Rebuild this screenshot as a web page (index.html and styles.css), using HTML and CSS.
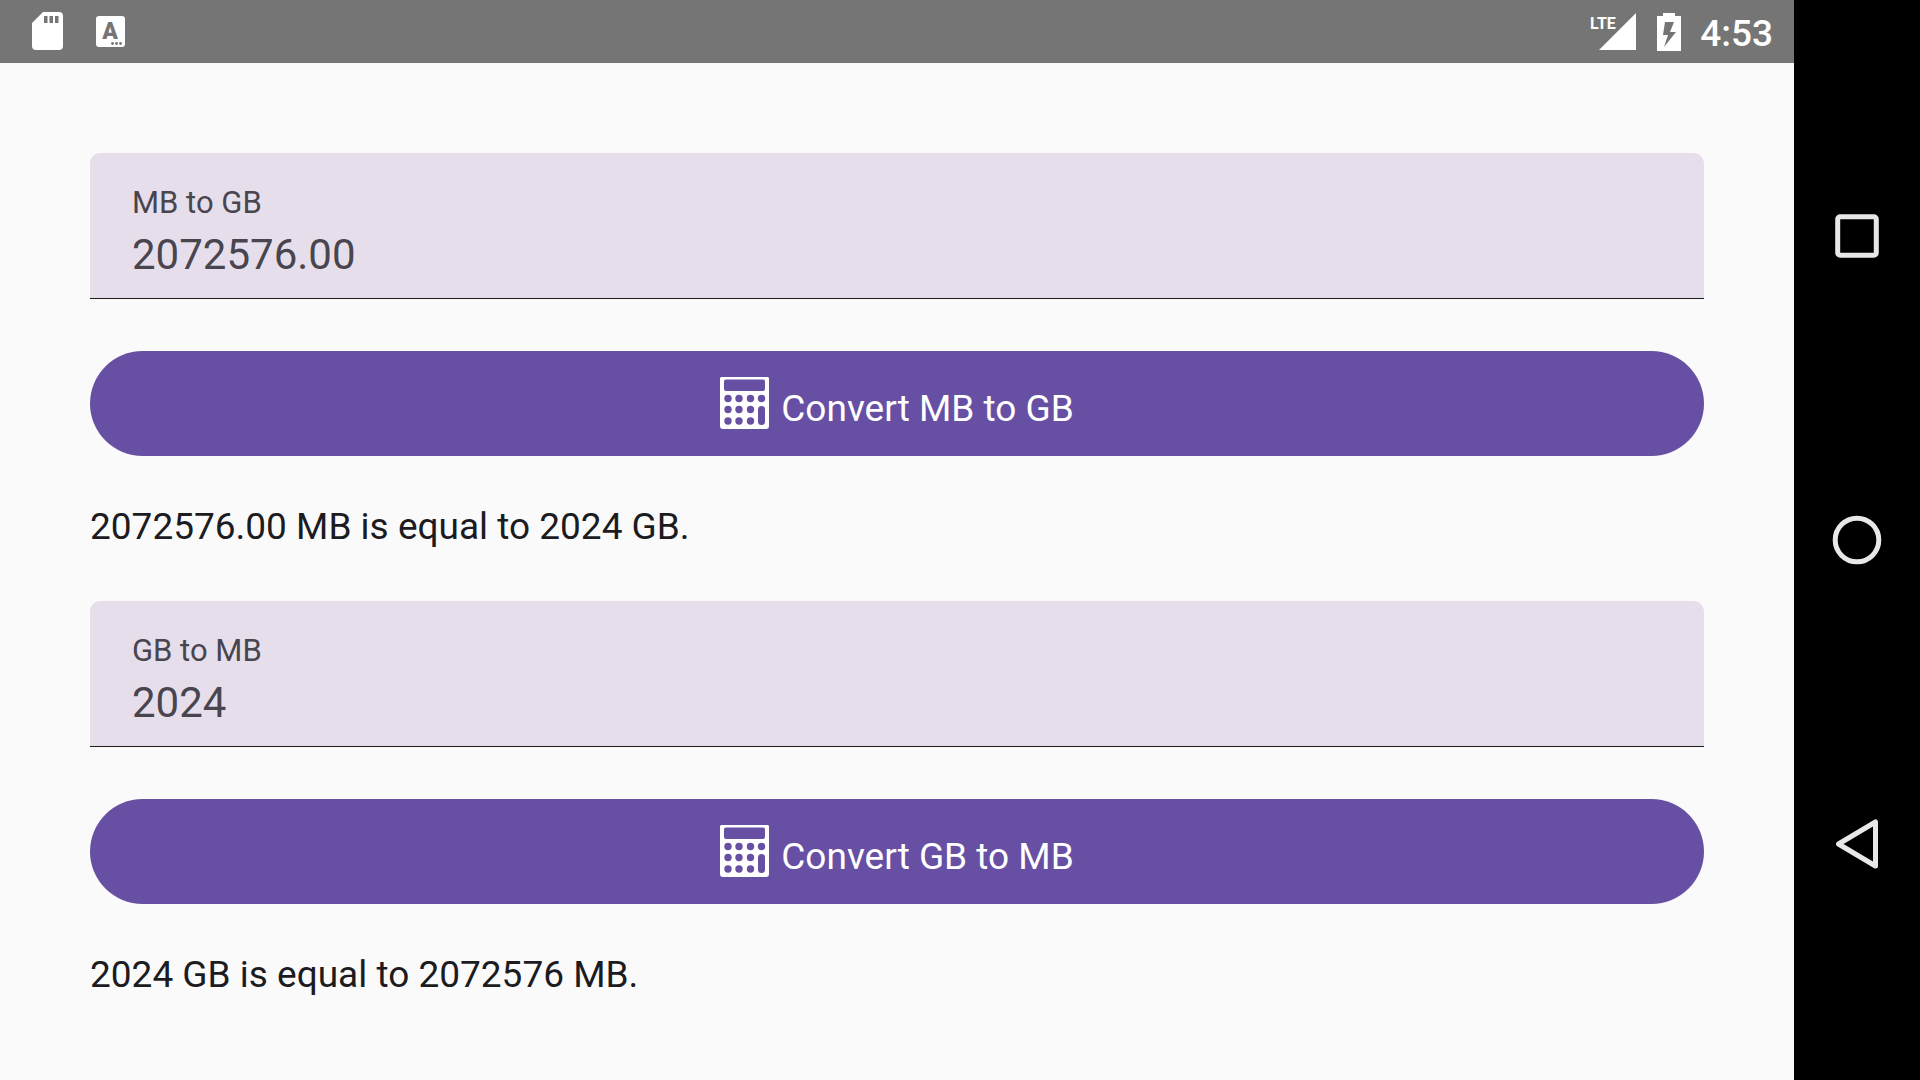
FILE: index.html
```html
<!DOCTYPE html>
<html lang="en">
<head>
  <meta charset="UTF-8" />
  <title>MB / GB Converter</title>
  <link rel="stylesheet" href="styles.css">
</head>
<body>
  <div class="screen">
    <header class="status-bar">
      <div class="status-left">
        <svg width="31" height="39" viewBox="0 0 31 39">
          <path fill="#fff" fill-rule="evenodd" d="M11 0H27a4 4 0 0 1 4 4V34a4 4 0 0 1-4 4H4a4 4 0 0 1-4-4V11ZM12 4v7h3.500V4ZM17.500 4v7h3.500V4ZM23 4v7h3.500V4Z"/>
        </svg>
        <svg width="29" height="31" viewBox="0 0 29 31">
          <rect width="29" height="31" rx="3" fill="#fff"/>
          <text class="badge-letter" x="14" y="23" text-anchor="middle">A</text>
          <g fill="#757575">
            <circle cx="16.500" cy="27.500" r="1.400"/>
            <circle cx="20.500" cy="27.500" r="1.400"/>
            <circle cx="24.500" cy="27.500" r="1.400"/>
          </g>
        </svg>
      </div>
      <div class="status-right">
        <svg width="48" height="38" viewBox="0 0 48 38">
          <path fill="#fff" d="M46 0V37H9Z"/>
          <text class="network" x="0" y="16">LTE</text>
        </svg>
        <svg width="24" height="38" viewBox="0 0 24 38">
          <path fill="#fff" fill-rule="evenodd" d="M6 0H18V3H24V38H0V3H6ZM8 9L6 22H11L7 34L19 19H13L17 9Z"/>
        </svg>
        <span class="clock">4:53</span>
      </div>
    </header>

    <main class="converter">
      <div class="field">
        <label for="mb">MB to GB</label>
        <input type="text" id="mb" value="2072576.00">
      </div>
      <button class="convert" onclick="convertMb()">
        <svg width="49" height="52" viewBox="0 0 49 52">
          <path fill="#fff" fill-rule="evenodd" d="M1 0H48L49 1V49a3 3 0 0 1-3 3H3a3 3 0 0 1-3-3V1ZM6 2.500a2 2 0 0 0-2 2V12a2 2 0 0 0 2 2H43a2 2 0 0 0 2-2V4.500a2 2 0 0 0-2-2Z"/>
          <g fill="#6750a4">
            <circle cx="8" cy="21.500" r="3.700"/><circle cx="19" cy="21.500" r="3.700"/><circle cx="30.500" cy="21.500" r="3.700"/><circle cx="41.500" cy="21.500" r="3.700"/>
            <circle cx="8" cy="32.500" r="3.700"/><circle cx="19" cy="32.500" r="3.700"/><circle cx="30.500" cy="32.500" r="3.700"/>
            <circle cx="8" cy="44" r="3.700"/><circle cx="19" cy="44" r="3.700"/><circle cx="30.500" cy="44" r="3.700"/>
            <rect x="38" y="29" width="7" height="19" rx="3.500"/>
          </g>
        </svg>
        <span>Convert MB to GB</span>
      </button>
      <p class="result" id="mb-result">2072576.00 MB is equal to 2024 GB.</p>

      <div class="field">
        <label for="gb">GB to MB</label>
        <input type="text" id="gb" value="2024">
      </div>
      <button class="convert" onclick="convertGb()">
        <svg width="49" height="52" viewBox="0 0 49 52">
          <path fill="#fff" fill-rule="evenodd" d="M1 0H48L49 1V49a3 3 0 0 1-3 3H3a3 3 0 0 1-3-3V1ZM6 2.500a2 2 0 0 0-2 2V12a2 2 0 0 0 2 2H43a2 2 0 0 0 2-2V4.500a2 2 0 0 0-2-2Z"/>
          <g fill="#6750a4">
            <circle cx="8" cy="21.500" r="3.700"/><circle cx="19" cy="21.500" r="3.700"/><circle cx="30.500" cy="21.500" r="3.700"/><circle cx="41.500" cy="21.500" r="3.700"/>
            <circle cx="8" cy="32.500" r="3.700"/><circle cx="19" cy="32.500" r="3.700"/><circle cx="30.500" cy="32.500" r="3.700"/>
            <circle cx="8" cy="44" r="3.700"/><circle cx="19" cy="44" r="3.700"/><circle cx="30.500" cy="44" r="3.700"/>
            <rect x="38" y="29" width="7" height="19" rx="3.500"/>
          </g>
        </svg>
        <span>Convert GB to MB</span>
      </button>
      <p class="result" id="gb-result">2024 GB is equal to 2072576 MB.</p>
    </main>
  </div>

  <nav class="nav-bar">
    <button aria-label="Recent apps">
      <svg width="50" height="50" viewBox="0 0 50 50">
        <rect x="5.700" y="5.700" width="38.600" height="38.600" rx="2.500"/>
      </svg>
    </button>
    <button aria-label="Home">
      <svg width="50" height="50" viewBox="0 0 50 50">
        <circle cx="25" cy="25" r="21.800"/>
      </svg>
    </button>
    <button aria-label="Back">
      <svg width="50" height="50" viewBox="0 0 50 50">
        <path d="M6.500 25L43.500 3V47Z"/>
      </svg>
    </button>
  </nav>

  <script>
    function convertMb() {
      const mb = document.getElementById("mb").value;
      document.getElementById("mb-result").textContent = `${mb} MB is equal to ${mb / 1024} GB.`;
    }

    function convertGb() {
      const gb = document.getElementById("gb").value;
      document.getElementById("gb-result").textContent = `${gb} GB is equal to ${gb * 1024} MB.`;
    }
  </script>
</body>
</html>
```

FILE: styles.css
```css
* {
  box-sizing: border-box;
}
body {
  margin: 0;
  display: flex;
  min-height: 100vh;
  font-family: Roboto, sans-serif;
  background-color: #fafafa;
  color: #1c1b1f;
}
svg {
  display: block;
  flex-shrink: 0;
}
.screen {
  flex: 1;
}

/* status bar */
.status-bar {
  display: flex;
  justify-content: space-between;
  align-items: center;
  height: 63px;
  padding: 0 21px 0 32px;
  background-color: #757575;
  color: white;
}
.status-left {
  display: flex;
  align-items: center;
  gap: 33px;
}
.status-right {
  display: flex;
  align-items: center;
  gap: 19px;
}
.badge-letter {
  font-size: 23px;
  font-weight: 900;
  fill: #757575;
}
.network {
  font-family: "Liberation Sans Narrow", Roboto, sans-serif;
  font-size: 16px;
  font-weight: 700;
  fill: white;
}
.clock {
  font-size: 37px;
  font-weight: 500;
  line-height: 41px;
  padding-top: 4px;
}

/* converter form */
.converter {
  display: flex;
  flex-direction: column;
  gap: 52px;
  padding: 90px 90px 52px;
}
.field {
  display: flex;
  flex-direction: column;
  padding: 29px 42px 19px;
  background-color: #e6dfeb;
  border-bottom: 1px solid #1c1b1f;
  border-radius: 10px 10px 0 0;
  color: #49454f;
}
.field label {
  font-size: 31px;
  line-height: 41px;
}
.field input {
  width: 100%;
  height: 56px;
  padding: 7px 0 0;
  border: none;
  outline: none;
  background: none;
  font-family: inherit;
  font-size: 42px;
  color: inherit;
}
.convert {
  display: flex;
  justify-content: center;
  align-items: flex-end;
  gap: 12px;
  padding: 26px 42px 27px;
  border: none;
  border-radius: 53px;
  background-color: #6750a4;
  color: white;
  font-family: inherit;
  font-size: 37px;
  line-height: 41px;
  cursor: pointer;
}
.result {
  margin: 0 0 4px;
  font-size: 37px;
  line-height: 37px;
}

/* navigation bar */
.nav-bar {
  display: flex;
  flex-direction: column;
  justify-content: space-evenly;
  width: 126px;
  background-color: black;
}
.nav-bar button {
  display: flex;
  justify-content: center;
  align-items: center;
  height: 136px;
  padding: 0;
  border: none;
  background: none;
  cursor: pointer;
}
.nav-bar svg {
  fill: none;
  stroke: #e8e8e8;
  stroke-width: 5;
  stroke-linejoin: round;
}
```
